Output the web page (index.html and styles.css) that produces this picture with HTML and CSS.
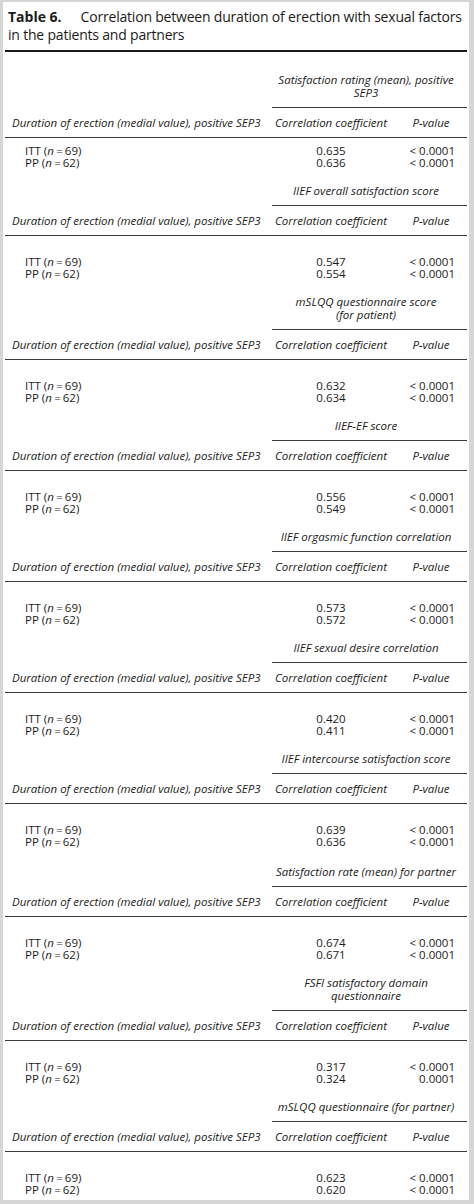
FILE: index.html
```html
<!DOCTYPE html>
<html lang="en">
<head>
<meta charset="utf-8">
<title>Table 6</title>
<link rel="stylesheet" href="styles.css">
</head>
<body>
<div class="sheet">
  <p class="caption"><span class="label">Table 6.</span>Correlation between duration of erection with sexual factors in the patients and partners</p>
  <table class="corr">
    <colgroup><col class="c1"><col class="c2"><col class="c3"></colgroup>
    <tbody class="sec first">
      <tr class="grp"><td></td><th colspan="2">Satisfaction rating (mean), positive<br>SEP3</th></tr>
      <tr class="cols"><th class="lbl">Duration of erection (medial value), positive SEP3</th><th class="cc">Correlation coefficient</th><th class="pv">P-value</th></tr>
      <tr class="d top"><td>ITT (<i>n</i>&thinsp;=&thinsp;69)</td><td>0.635</td><td>&lt; 0.0001</td></tr>
      <tr class="d"><td>PP (<i>n</i>&thinsp;=&thinsp;62)</td><td>0.636</td><td>&lt; 0.0001</td></tr>
    </tbody>
    <tbody class="sec">
      <tr class="grp"><td></td><th colspan="2">IIEF overall satisfaction score</th></tr>
      <tr class="cols"><th class="lbl">Duration of erection (medial value), positive SEP3</th><th class="cc">Correlation coefficient</th><th class="pv up">P-value</th></tr>
      <tr class="d top"><td>ITT (<i>n</i>&thinsp;=&thinsp;69)</td><td>0.547</td><td>&lt; 0.0001</td></tr>
      <tr class="d"><td>PP (<i>n</i>&thinsp;=&thinsp;62)</td><td>0.554</td><td>&lt; 0.0001</td></tr>
    </tbody>
    <tbody class="sec">
      <tr class="grp"><td></td><th colspan="2">mSLQQ questionnaire score<br>(for patient)</th></tr>
      <tr class="cols"><th class="lbl">Duration of erection (medial value), positive SEP3</th><th class="cc">Correlation coefficient</th><th class="pv">P-value</th></tr>
      <tr class="d top"><td>ITT (<i>n</i>&thinsp;=&thinsp;69)</td><td>0.632</td><td>&lt; 0.0001</td></tr>
      <tr class="d"><td>PP (<i>n</i>&thinsp;=&thinsp;62)</td><td>0.634</td><td>&lt; 0.0001</td></tr>
    </tbody>
    <tbody class="sec">
      <tr class="grp"><td></td><th colspan="2">IIEF-EF score</th></tr>
      <tr class="cols"><th class="lbl">Duration of erection (medial value), positive SEP3</th><th class="cc">Correlation coefficient</th><th class="pv">P-value</th></tr>
      <tr class="d top"><td>ITT (<i>n</i>&thinsp;=&thinsp;69)</td><td>0.556</td><td>&lt; 0.0001</td></tr>
      <tr class="d"><td>PP (<i>n</i>&thinsp;=&thinsp;62)</td><td>0.549</td><td>&lt; 0.0001</td></tr>
    </tbody>
    <tbody class="sec">
      <tr class="grp"><td></td><th colspan="2">IIEF orgasmic function correlation</th></tr>
      <tr class="cols"><th class="lbl">Duration of erection (medial value), positive SEP3</th><th class="cc">Correlation coefficient</th><th class="pv">P-value</th></tr>
      <tr class="d top"><td>ITT (<i>n</i>&thinsp;=&thinsp;69)</td><td>0.573</td><td>&lt; 0.0001</td></tr>
      <tr class="d"><td>PP (<i>n</i>&thinsp;=&thinsp;62)</td><td>0.572</td><td>&lt; 0.0001</td></tr>
    </tbody>
    <tbody class="sec">
      <tr class="grp"><td></td><th colspan="2">IIEF sexual desire correlation</th></tr>
      <tr class="cols"><th class="lbl">Duration of erection (medial value), positive SEP3</th><th class="cc">Correlation coefficient</th><th class="pv">P-value</th></tr>
      <tr class="d top"><td>ITT (<i>n</i>&thinsp;=&thinsp;69)</td><td>0.420</td><td>&lt; 0.0001</td></tr>
      <tr class="d"><td>PP (<i>n</i>&thinsp;=&thinsp;62)</td><td>0.411</td><td>&lt; 0.0001</td></tr>
    </tbody>
    <tbody class="sec">
      <tr class="grp"><td></td><th colspan="2">IIEF intercourse satisfaction score</th></tr>
      <tr class="cols"><th class="lbl">Duration of erection (medial value), positive SEP3</th><th class="cc">Correlation coefficient</th><th class="pv">P-value</th></tr>
      <tr class="d top"><td>ITT (<i>n</i>&thinsp;=&thinsp;69)</td><td>0.639</td><td>&lt; 0.0001</td></tr>
      <tr class="d"><td>PP (<i>n</i>&thinsp;=&thinsp;62)</td><td>0.636</td><td>&lt; 0.0001</td></tr>
    </tbody>
    <tbody class="sec late">
      <tr class="grp"><td></td><th colspan="2">Satisfaction rate (mean) for partner</th></tr>
      <tr class="cols"><th class="lbl">Duration of erection (medial value), positive SEP3</th><th class="cc">Correlation coefficient</th><th class="pv">P-value</th></tr>
      <tr class="d top"><td>ITT (<i>n</i>&thinsp;=&thinsp;69)</td><td>0.674</td><td>&lt; 0.0001</td></tr>
      <tr class="d"><td>PP (<i>n</i>&thinsp;=&thinsp;62)</td><td>0.671</td><td>&lt; 0.0001</td></tr>
    </tbody>
    <tbody class="sec">
      <tr class="grp"><td></td><th colspan="2">FSFI satisfactory domain<br>questionnaire</th></tr>
      <tr class="cols"><th class="lbl">Duration of erection (medial value), positive SEP3</th><th class="cc">Correlation coefficient</th><th class="pv">P-value</th></tr>
      <tr class="d top"><td>ITT (<i>n</i>&thinsp;=&thinsp;69)</td><td>0.317</td><td>&lt; 0.0001</td></tr>
      <tr class="d"><td>PP (<i>n</i>&thinsp;=&thinsp;62)</td><td>0.324</td><td>0.0001</td></tr>
    </tbody>
    <tbody class="sec">
      <tr class="grp"><td></td><th colspan="2">mSLQQ questionnaire (for partner)</th></tr>
      <tr class="cols"><th class="lbl">Duration of erection (medial value), positive SEP3</th><th class="cc">Correlation coefficient</th><th class="pv">P-value</th></tr>
      <tr class="d top"><td>ITT (<i>n</i>&thinsp;=&thinsp;69)</td><td>0.623</td><td>&lt; 0.0001</td></tr>
      <tr class="d"><td>PP (<i>n</i>&thinsp;=&thinsp;62)</td><td>0.620</td><td>&lt; 0.0001</td></tr>
    </tbody>
  </table>
</div>
</body>
</html>
```

FILE: styles.css
```css
html, body {
  margin: 0;
  padding: 0;
}
body {
  background: #d6d6d6;
  padding: 2px 5px 4px 3px;
  font-family: "Open Sans", "Noto Sans", sans-serif;
  color: #1b1b1b;
}
.sheet {
  background: #ffffff;
  padding: 6px 2px 5px 2px;
  height: 1198px;
  box-sizing: border-box;
  overflow: hidden;
}
.caption {
  margin: 0;
  padding: 0 3px 6px 3px;
  font-size: 14px;
  line-height: 18px;
  letter-spacing: -0.2px;
  border-bottom: 2px solid #1a1a1a;
}
.caption .label {
  font-weight: 700;
  letter-spacing: 0;
  margin-right: 19px;
}
.corr {
  width: 462px;
  border-collapse: collapse;
  table-layout: fixed;
  font-size: 11.5px;
}
.c1 { width: 267px; }
.c2 { width: 118px; }
.c3 { width: 77px; }
.corr th, .corr td {
  padding: 0;
  white-space: nowrap;
}
.corr th {
  font-weight: 400;
  font-style: italic;
}
.grp th {
  text-align: center;
  line-height: 13px;
  padding: 15px 7px 8px 0;
  border-bottom: 1px solid #3a3a3a;
}
.first .grp th {
  padding-top: 21px;
}
.late .grp th {
  padding-top: 17px;
}
.cols th {
  line-height: 13px;
  padding: 8px 0 8px 0;
  border-bottom: 1px solid #3a3a3a;
}
.cols .lbl {
  text-align: left;
  padding-left: 7px;
}
.cols .cc {
  text-align: center;
}
.cols .pv {
  text-align: center;
  padding-left: 6px;
  padding-right: 1px;
}
.d td {
  line-height: 12px;
}
.d.top td {
  padding-top: 20px;
}
.first .d.top td {
  padding-top: 7px;
}
.d td:first-child {
  padding-left: 20px;
}
.d td:nth-child(2) {
  text-align: center;
}
.d td:nth-child(3) {
  text-align: right;
  padding-right: 12px;
}
.d i {
  padding-right: 0.5px;
}
```
